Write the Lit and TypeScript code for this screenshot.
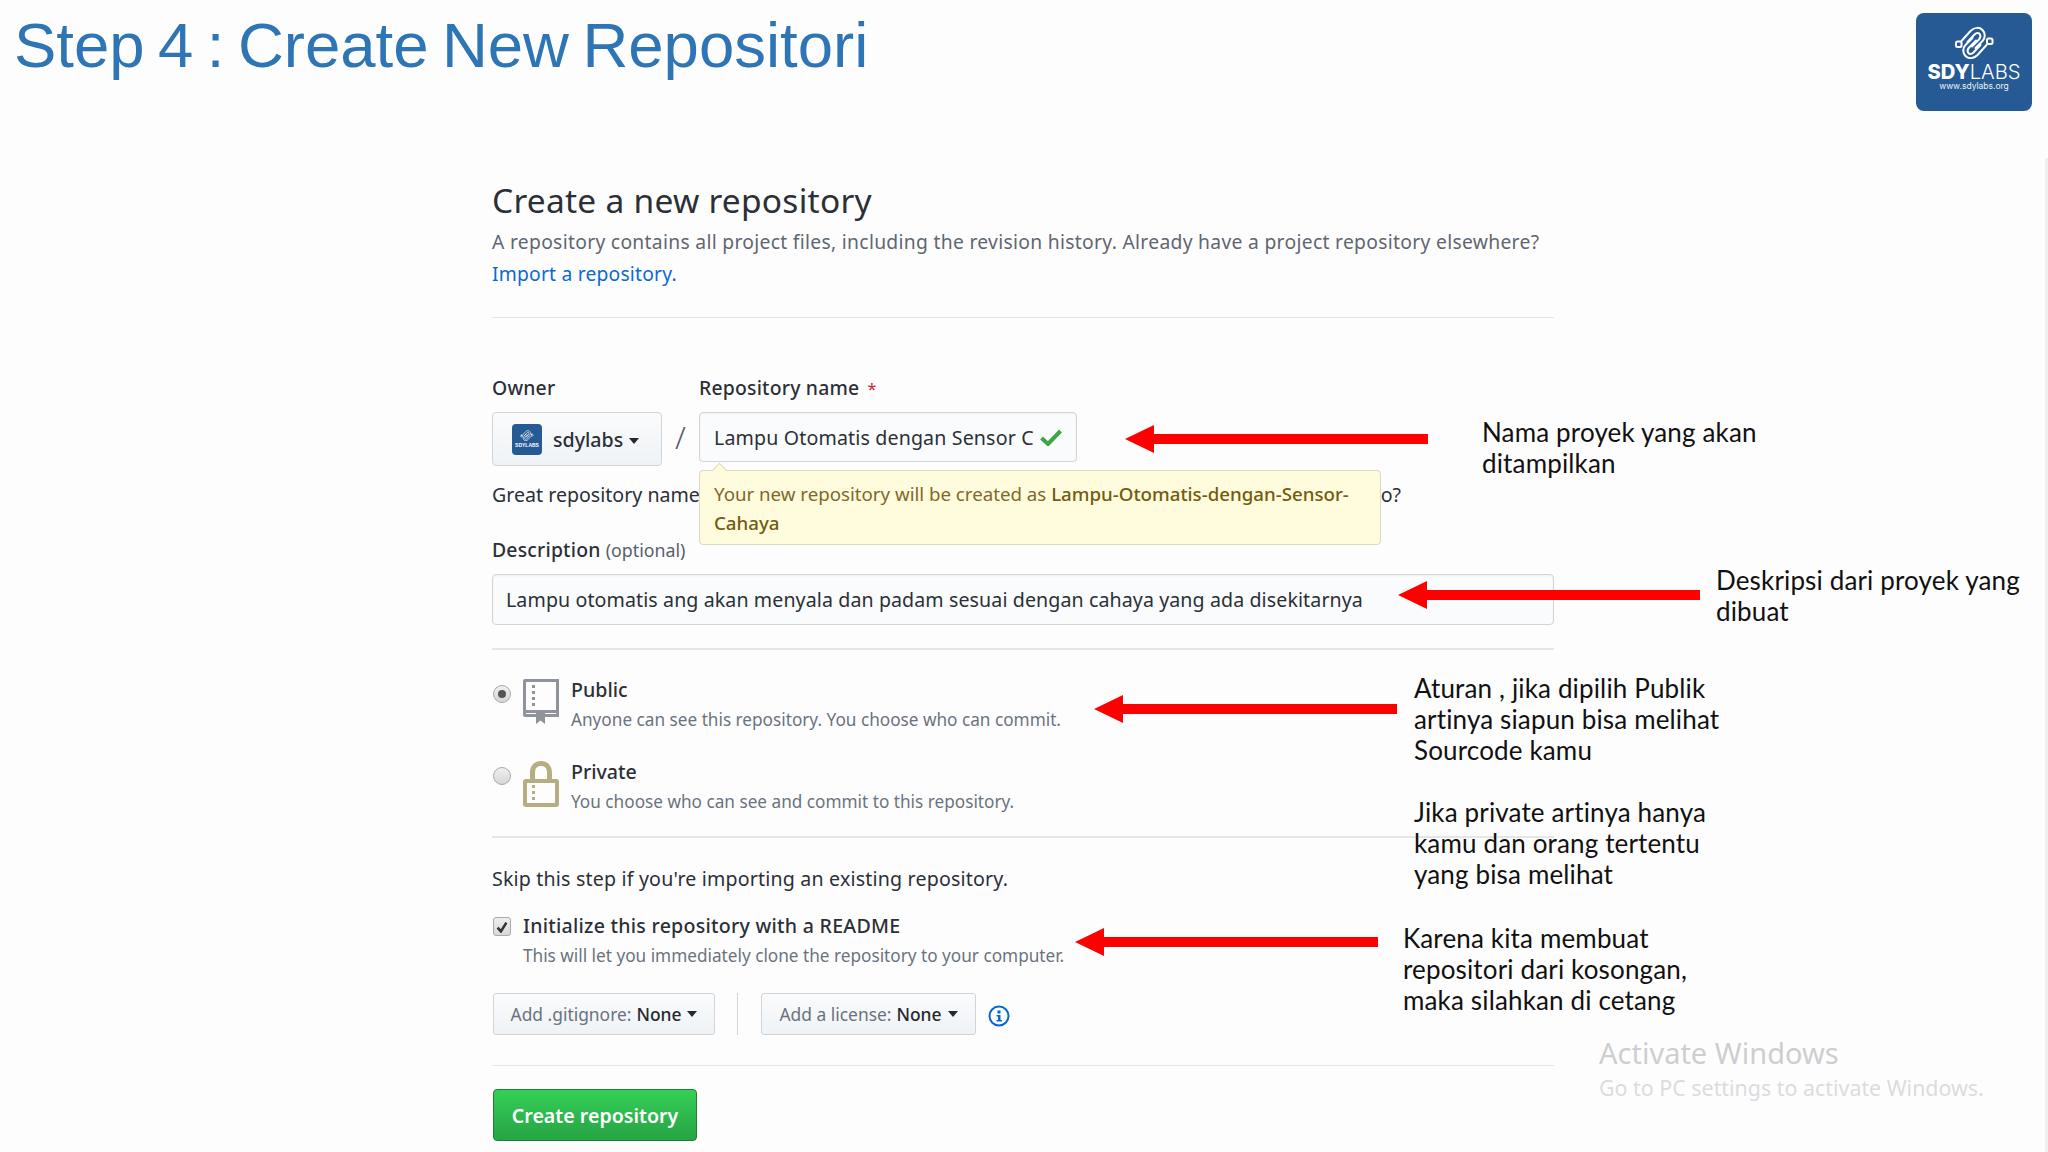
import { LitElement, html, css, svg } from "lit";
import { customElement } from "lit/decorators.js";

const NOTES = [
  { x: 1482, y: 417, lines: ["Nama proyek yang akan", "ditampilkan"] },
  { x: 1716, y: 565, lines: ["Deskripsi dari proyek yang", "dibuat"] },
  { x: 1414, y: 673, lines: ["Aturan , jika dipilih Publik", "artinya siapun bisa melihat", "Sourcode kamu", "\u00a0", "Jika private artinya hanya", "kamu dan orang tertentu", "yang bisa melihat"] },
  { x: 1403, y: 923, lines: ["Karena kita membuat", "repositori dari kosongan,", "maka silahkan di cetang"] },
];
const ARROWS = [
  { x1: 1125, x2: 1428, y: 439 },
  { x1: 1398, x2: 1700, y: 595 },
  { x1: 1094, x2: 1397, y: 709 },
  { x1: 1075, x2: 1378, y: 942 },
];

@customElement("app-root")
export class AppRoot extends LitElement {
  static styles = css`
    :host { display: block; width: 2048px; height: 1152px; overflow: hidden; }
    .page { position: relative; width: 2048px; height: 1152px; background: #fefdfe; overflow: hidden; font-family: "Noto Sans", "Open Sans", sans-serif; color: #2b3036; }
    .edge { position: absolute; right: 0; top: 158px; bottom: 0; width: 3px; background: #efefef; }
    .head { display: flex; justify-content: space-between; align-items: flex-start; height: 179px; box-sizing: border-box; padding: 14px 16px 0 14px; }
    h1 { margin: 0; font: 400 63.5px/62px "Liberation Sans", sans-serif; word-spacing: -4.2px; color: #2e75b6; }
    .logo { width: 116px; height: 98px; margin-top: -1px; border-radius: 8px; background: #255a94; color: #fff; display: flex; flex-direction: column; align-items: center; box-sizing: border-box; padding-top: 13px; }
    .logo svg { display: block; }
    .logo .brand { font: 300 20.2px/20px "Inter", sans-serif; margin-top: 3px; white-space: nowrap; }
    .logo .brand b { font-weight: 800; }
    .logo .url { font: 400 8.5px/11px "Inter", sans-serif; margin-top: -1px; opacity: .92; }
    .form { width: 1062px; margin-left: 492px; font-size: 19.6px; }
    h2 { margin: 0; font-weight: 400; font-size: 33.5px; letter-spacing: .25px; line-height: 42px; color: #2b3036; }
    .line { line-height: 30px; height: 30px; white-space: nowrap; }
    .muted { color: #586069; }
    .desc { line-height: 32px; height: 32px; margin-top: 5px; white-space: nowrap; color: #5f676f; font-size: 19.3px; letter-spacing: .3px; }
    .desc + .desc { margin-top: 0; }
    .link { color: #0a6ad0; letter-spacing: .2px; }
    .rule { height: 1px; background: #e4e6e9; }
    .label { font-weight: 500; font-size: 19.4px; letter-spacing: .2px; }
    .star { color: #cb2431; margin-left: 8px; font-size: 16px; font-weight: 400; line-height: 0; }
    .controls { display: flex; margin-top: 9px; height: 54px; align-items: flex-start; }
    .owner { width: 170px; height: 54px; box-sizing: border-box; border: 1px solid #d1d5da; border-radius: 4px; background: linear-gradient(#fafbfc, #eff3f6); display: flex; align-items: center; padding-left: 19px; gap: 11px; font-weight: 500; font-size: 19.6px; }
    .avatar { width: 30px; height: 31px; border-radius: 4px; background: #255a94; display: flex; flex-direction: column; align-items: center; justify-content: center; gap: 1px; color: #fff; font: 700 5px/6px "Liberation Sans", sans-serif; }
    .caret { display: inline-block; width: 0; height: 0; border: 5.5px solid transparent; border-top: 6px solid #24292e; border-bottom: 0; margin-left: 6px; vertical-align: middle; }
    .slash { width: 37px; text-align: center; font-size: 31px; line-height: 50px; color: #586069; flex: none; font-weight: 300; }
    .input { box-sizing: border-box; border: 1px solid #d1d5da; border-radius: 4px; background: #fafbfc; display: flex; align-items: center; box-shadow: inset 0 1px 2px rgba(27,31,35,.05); white-space: nowrap; }
    .name { width: 378px; height: 50px; padding-left: 14px; flex: none; letter-spacing: .15px; }
    .name span { width: 318px; display: block; }
    .name svg { margin-left: 8px; flex: none; }
    .great { display: flex; margin-top: 14px; }
    .wrap { position: relative; }
    .tip { position: absolute; left: 207px; top: 152px; width: 682px; height: 75px; box-sizing: border-box; background: #fffbdd; border: 1px solid #dfd8c2; border-radius: 4px; padding: 8px 14px; font-size: 18.7px; line-height: 29px; color: #80692a; }
    .tip b { font-weight: 500; color: #735c0f; }
    .tip::before { content: ""; position: absolute; left: 14px; top: -6px; width: 10px; height: 10px; background: #fffbdd; border-left: 1px solid #dfd8c2; border-top: 1px solid #dfd8c2; transform: rotate(45deg); }
    .descinput { height: 51px; margin-top: 9px; padding-left: 13px; width: 1062px; font-size: 19.6px; letter-spacing: .1px; }
    .choice { display: grid; grid-template-columns: 30px 48px 1fr; position: relative; height: 61px; margin-left: 1px; }
    .radio { width: 18px; height: 18px; border-radius: 50%; box-sizing: border-box; border: 1px solid #a9a9a9; background: linear-gradient(#f0f0f0, #d6d6d6); display: flex; align-items: center; justify-content: center; margin-top: 10px; }
    .radio i { width: 8px; height: 8px; border-radius: 50%; background: #555; display: block; }
    .title { font-weight: 500; line-height: 30px; height: 30px; font-size: 19.6px; }
    .sub { color: #6a737d; line-height: 30px; height: 30px; font-size: 17.2px; white-space: nowrap; }
    .check { display: grid; grid-template-columns: 30px 1fr; margin-left: 1px; }
    .check .title { letter-spacing: .25px; }
    .box { width: 18px; height: 19px; box-sizing: border-box; border: 1px solid #a9a9a9; border-radius: 3px; background: linear-gradient(#eee, #d8d8d8); margin-top: 6px; display: flex; align-items: center; justify-content: center; }
    .picks { display: flex; align-items: center; margin-top: 22px; height: 42px; margin-left: 1px; }
    .pick { height: 42px; box-sizing: border-box; border: 1px solid #d1d5da; border-radius: 3px; background: linear-gradient(#fafbfc, #eff3f6); font-size: 17.4px; color: #6a737d; display: flex; align-items: center; justify-content: center; white-space: nowrap; }
    .pick b { font-weight: 500; color: #24292e; margin-left: 5px; }
    .sep { width: 1px; height: 42px; background: #d1d5da; margin: 0 23px 0 22px; }
    .info { margin-left: 12px; margin-top: 3px; }
    .create { width: 204px; height: 52px; margin: 23px 0 0 1px; box-sizing: border-box; border: 1px solid #1b7f37; border-radius: 4px; background: linear-gradient(#34d058, #28a745 90%); color: #fff; font-weight: 600; font-size: 19.6px; display: flex; align-items: center; justify-content: center; }
    .note { position: absolute; font: 400 26px/31px "Lato", sans-serif; letter-spacing: .15px; color: #111; white-space: nowrap; }
    .arrow { position: absolute; display: block; overflow: visible; }
    .wm { position: absolute; left: 1599px; top: 1033px; color: #cfcdd1; }
    .wm div:first-child { font-size: 29px; line-height: 40px; }
    .wm div:last-child { font-size: 21.4px; line-height: 29px; color: #dcdbde; }
  `;

  private arrow(a: { x1: number; x2: number; y: number }) {
    const w = a.x2 - a.x1;
    return html`<svg class="arrow" width=${w} height="30" style=${`left:${a.x1}px;top:${a.y - 15}px`} viewBox="0 0 ${w} 30"><path d="M0 15 29 1V10H${w}V20H29V29Z" fill="#ff0000"/></svg>`;
  }

  private book() {
    return svg`<svg width="36" height="47" viewBox="0 0 36 47"><path fill="#8e9499" fill-rule="evenodd" d="M2 0H36V38H22V45L17.500 41.500 13 45V38H2A2 2 0 0 1 0 36V2A2 2 0 0 1 2 0ZM3 3V31H33V3ZM3 34V35H13V34ZM22 34V35H33V34Z"/><path fill="#8e9499" d="M9 6h3v3H9zM9 12h3v3H9zM9 18h3v3H9zM9 24h3v3H9z"/></svg>`;
  }

  private lock() {
    return svg`<svg width="36" height="46" viewBox="0 0 36 46"><path fill="#b6ad80" fill-rule="evenodd" d="M7 18V12C7 4 12 0 18 0S29 4 29 12V18H33A3 3 0 0 1 36 21V43A3 3 0 0 1 33 46H3A3 3 0 0 1 0 43V21A3 3 0 0 1 3 18ZM12 18H24V12C24 7 22 5 18 5S12 7 12 12ZM4 22V42H32V22Z"/><path fill="#b6ad80" d="M9 24h3v3H9zM9 30h3v3H9zM9 36h3v3H9z"/></svg>`;
  }

  private mark(w: number, h: number) {
    return svg`<svg width=${w} height=${h} viewBox="12 6 40 33" fill="none" stroke="#fff" stroke-width="2" stroke-linecap="round">
      <path d="M19 21 28 11C32 7 37 7 40 10 43 13 43 18 40 21L33 28"/>
      <path d="M25 22 32 14.500C34 12.500 36.500 12.500 37.500 14.500 38.500 16.500 38 18 36 20L29.500 26.500"/>
      <path d="M44 25 35 35C31 39 26 39 23 36 20 33 20 28 23 25L30 18"/>
      <path d="M38 25 31 32.500C29 34.500 26.500 34.500 25.500 32.500 24.500 30.500 25 29 27 27L33.500 20.500"/>
      <rect x="13.500" y="21.500" width="5.500" height="5.500" rx="1.500"/>
      <rect x="44.500" y="18.500" width="5.500" height="5.500" rx="1.500"/>
    </svg>`;
  }

  render() {
    return html`<div class="page">
      <div class="edge"></div>
      <div class="head">
        <h1>Step 4 : Create New Repositori</h1>
        <div class="logo">
          ${this.mark(41, 33)}
          <div class="brand"><b>SDY</b>LABS</div>
          <div class="url">www.sdylabs.org</div>
        </div>
      </div>

      <div class="form">
        <h2>Create a new repository</h2>
        <div class="desc">A repository contains all project files, including the revision history. Already have a project repository elsewhere?</div>
        <div class="desc link">Import a repository.</div>
        <div class="rule" style="margin-top:27px"></div>

        <div class="wrap">
          <div style="height:55px"></div>
          <div class="line" style="display:flex">
            <span class="label" style="width:207px">Owner</span>
            <span class="label">Repository name<span class="star">*</span></span>
          </div>
          <div class="controls">
            <div class="owner"><span class="avatar">${this.mark(14, 11)}<span>SDYLABS</span></span><span>sdylabs<span class="caret"></span></span></div>
            <div class="slash">/</div>
            <div class="input name"><span>Lampu Otomatis dengan Sensor C</span>
              <svg width="22" height="17" viewBox="0 0 22 17"><path d="M1.500 9 8 15 20.500 2" fill="none" stroke="#3fa648" stroke-width="4"/></svg>
            </div>
          </div>
          <div class="line great"><span>Great repository name</span><span style="margin-left:auto;padding-right:153px">o?</span></div>
          <div class="tip">Your new repository will be created as <b>Lampu-Otomatis-dengan-Sensor-Cahaya</b></div>
        </div>

        <div class="line" style="margin-top:25px"><span class="label">Description</span> <span class="muted" style="font-size:17.800px">(optional)</span></div>
        <div class="input descinput">Lampu otomatis ang akan menyala dan padam sesuai dengan cahaya yang ada disekitarnya</div>
        <div class="rule" style="margin-top:23px;height:2px"></div>

        <div style="height:25px"></div>
        <div class="choice" style="margin-bottom:21px">
          <div class="radio"><i></i></div>
          <div style="margin-top:4px">${this.book()}</div>
          <div><div class="title">Public</div><div class="sub">Anyone can see this repository. You choose who can commit.</div></div>
        </div>
        <div class="choice">
          <div class="radio" style="margin-top:10px"></div>
          <div style="margin-top:4px">${this.lock()}</div>
          <div><div class="title">Private</div><div class="sub">You choose who can see and commit to this repository.</div></div>
        </div>
        <div class="rule" style="margin-top:18px;height:2px"></div>

        <div class="line" style="margin-top:26px;letter-spacing:.18px">Skip this step if you're importing an existing repository.</div>
        <div class="check" style="margin-top:17px">
          <div class="box"><svg width="12" height="12" viewBox="0 0 11 11"><path d="M1.500 6 4.500 9.500 9.500 1.500" fill="none" stroke="#333" stroke-width="2.400"/></svg></div>
          <div><div class="title">Initialize this repository with a README</div><div class="sub">This will let you immediately clone the repository to your computer.</div></div>
        </div>
        <div class="picks">
          <div class="pick" style="width:222px">Add .gitignore:<b>None</b><span class="caret"></span></div>
          <div class="sep"></div>
          <div class="pick" style="width:215px">Add a license:<b>None</b><span class="caret"></span></div>
          <svg class="info" width="22" height="22" viewBox="0 0 22 22"><circle cx="11" cy="11" r="9.500" fill="none" stroke="#0366d6" stroke-width="2"/><path d="M9.500 5.500h3v3h-3zM8.500 10h4v5h1.500v1.500H8.500V15H10v-3.500H8.500z" fill="#0366d6"/></svg>
        </div>
        <div class="rule" style="margin-top:30px"></div>
        <div class="create">Create repository</div>
      </div>

      ${ARROWS.map((a) => this.arrow(a))}
      ${NOTES.map((n) => html`<div class="note" style=${`left:${n.x}px;top:${n.y}px`}>${n.lines.map((l) => html`<div>${l}</div>`)}</div>`)}
      <div class="wm"><div>Activate Windows</div><div>Go to PC settings to activate Windows.</div></div>
    </div>`;
  }
}
